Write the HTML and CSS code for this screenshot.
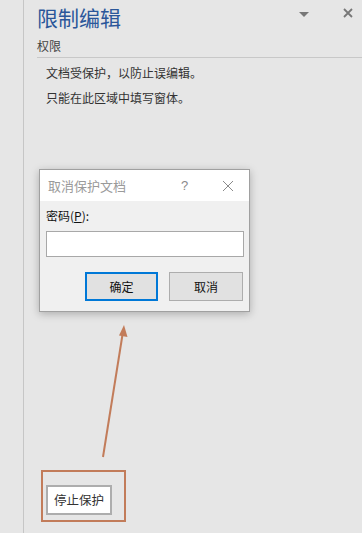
FILE: index.html
```html
<!DOCTYPE html>
<html lang="zh">
<head>
<meta charset="utf-8">
<link rel="stylesheet" href="styles.css">
</head>
<body>
<div class="app">
  <div class="strip"></div>
  <div class="pane">
    <div class="pane-head">
      <div class="pane-title">限制编辑</div>
      <div class="pane-tools">
        <svg class="tri" width="10" height="5" viewBox="0 0 10 5"><path d="M0 0H10L5 5Z" fill="#777"/></svg>
        <svg class="close" width="10" height="10" viewBox="0 0 10 10"><path d="M1 1L9 9M9 1L1 9" stroke="#777" stroke-width="1.8"/></svg>
      </div>
    </div>
    <div class="section">权限</div>
    <div class="msg">
      <p>文档受保护，以防止误编辑。</p>
      <p>只能在此区域中填写窗体。</p>
    </div>
    <div class="stop-wrap">
      <button class="stop-btn">停止保护</button>
    </div>
  </div>
</div>

<div class="dialog">
  <div class="dlg-title">
    <span class="dlg-name">取消保护文档</span>
    <span class="dlg-help">?</span>
    <svg class="dlg-x" width="12" height="12" viewBox="0 0 12 12"><path d="M1 1L11 11M11 1L1 11" stroke="#8a8a8a" stroke-width="1"/></svg>
  </div>
  <div class="dlg-body">
    <div class="label">密码(<u>P</u>):</div>
    <div class="input"></div>
    <div class="btns">
      <button class="btn primary">确定</button>
      <button class="btn">取消</button>
    </div>
  </div>
</div>

<svg class="arrow" width="362" height="533" viewBox="0 0 362 533">
  <line x1="103" y1="457" x2="122.6" y2="334" stroke="#c27c5a" stroke-width="2"/>
  <path d="M124 325L127.5 337L119 335.6Z" fill="#c27c5a"/>
</svg>
</body>
</html>
```

FILE: styles.css
```css
html, body {
  margin: 0;
  padding: 0;
}
body {
  width: 362px;
  height: 533px;
  background: #e6e6e6;
  font-family: "Noto Sans CJK SC", "Noto Sans", sans-serif;
  overflow: hidden;
  position: relative;
}
.app {
  display: flex;
  height: 533px;
}
.strip {
  width: 23px;
  border-right: 1px solid #c6c6c6;
  flex: none;
}
.pane {
  flex: 1;
  padding-left: 13px;
  display: flex;
  flex-direction: column;
}
.pane-head {
  display: flex;
  justify-content: space-between;
  align-items: flex-start;
  height: 36px;
}
.pane-title {
  font-size: 21px;
  line-height: 28px;
  margin-top: 3px;
  color: #2b579a;
  letter-spacing: 0px;
}
.pane-tools {
  display: flex;
  align-items: flex-start;
  padding-right: 9px;
}
.tri {
  margin-top: 12px;
  margin-right: 34px;
}
.close {
  margin-top: 8px;
}
.section {
  font-size: 12px;
  line-height: 18px;
  color: #444;
  padding-bottom: 2px;
  border-bottom: 1px solid #c8c8c8;
  margin-top: 1px;
}
.msg {
  padding-left: 9px;
  padding-top: 2px;
}
.msg p {
  margin: 0;
  font-size: 12px;
  line-height: 25px;
  color: #333;
}
.stop-wrap {
  margin-top: 360px;
  margin-left: 4px;
  width: 81px;
  height: 48px;
  border: 2px solid #c27c5a;
  box-sizing: content-box;
  padding: 0;
}
.stop-btn {
  margin: 13px 0 0 3px;
  width: 66px;
  height: 30px;
  background: #fff;
  border: 2px solid #adadad;
  font-family: inherit;
  font-size: 12.5px;
  color: #333;
  padding: 0;
  line-height: 26px;
}
.dialog {
  position: absolute;
  left: 39px;
  top: 169px;
  width: 209px;
  height: 141px;
  border: 1px solid #a0a0a0;
  background: #f0f0f0;
  box-shadow: 0 2px 8px rgba(0,0,0,0.25);
  display: flex;
  flex-direction: column;
}
.dlg-title {
  height: 31px;
  background: #fff;
  display: flex;
  align-items: center;
  padding-left: 8px;
  flex: none;
}
.dlg-name {
  font-size: 13px;
  color: #9a9a9a;
  width: 133px;
}
.dlg-help {
  font-size: 13px;
  color: #8a8a8a;
  width: 41px;
  font-family: "Liberation Sans", sans-serif;
}
.dlg-x {
  margin-top: 1px;
}
.dlg-body {
  padding: 6px 5px 0 6px;
}
.label {
  font-size: 12px;
  line-height: 18px;
  color: #111;
}
.input {
  margin-top: 6px;
  width: 196px;
  height: 24px;
  background: #fff;
  border: 1px solid #a8a8a8;
}
.btns {
  display: flex;
  gap: 11px;
  margin-top: 15px;
  padding-left: 39px;
}
.btn {
  width: 74px;
  height: 29px;
  box-sizing: border-box;
  background: #e1e1e1;
  border: 1px solid #adadad;
  font-family: inherit;
  font-size: 12px;
  color: #111;
  padding: 0;
}
.btn.primary {
  width: 73px;
  border: 2px solid #0078d7;
}
.arrow {
  position: absolute;
  left: 0;
  top: 0;
  pointer-events: none;
}
```
